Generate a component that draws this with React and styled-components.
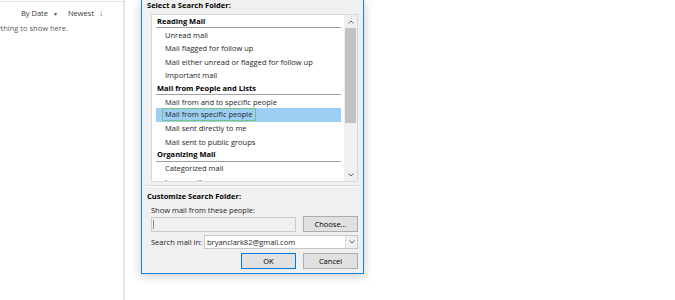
import React from "react";
import styled, { createGlobalStyle } from "styled-components";

const groups = [
  {
    title: "Reading Mail",
    items: [
      "Unread mail",
      "Mail flagged for follow up",
      "Mail either unread or flagged for follow up",
      "Important mail",
    ],
  },
  {
    title: "Mail from People and Lists",
    items: [
      "Mail from and to specific people",
      "Mail from specific people",
      "Mail sent directly to me",
      "Mail sent to public groups",
    ],
  },
  {
    title: "Organizing Mail",
    items: ["Categorized mail", "Large mail", "Old mail"],
  },
];

const SELECTED = "Mail from specific people";

const Chevron = ({ up }) => (
  <svg width="6" height="4" viewBox="0 0 6 4">
    <polyline
      points={up ? "0.5,3.5 3,1 5.5,3.5" : "0.5,0.5 3,3 5.5,0.5"}
      fill="none"
      stroke="#606060"
      strokeWidth="1"
    />
  </svg>
);

const App = () => {
  return (
    <Page>
      <GlobalStyle />
      <LeftPane>
        <SortBar>
          <SortItem>
            By Date <Caret>▾</Caret>
          </SortItem>
          <SortItem>
            Newest <Arrow>↓</Arrow>
          </SortItem>
        </SortBar>
        <Empty>We didn't find anything to show here.</Empty>
      </LeftPane>

      <Dialog>
        <Heading>Select a Search Folder:</Heading>
        <ListBox>
          <ListBody>
            {groups.map(g => (
              <React.Fragment key={g.title}>
                <Row $header>{g.title}</Row>
                {g.items.map(item => (
                  <Row key={item} $selected={item === SELECTED}>
                    {item === SELECTED ? <Focus>{item}</Focus> : item}
                  </Row>
                ))}
              </React.Fragment>
            ))}
          </ListBody>
          <ScrollBar>
            <ScrollArrow>
              <Chevron up />
            </ScrollArrow>
            <Track>
              <Thumb />
            </Track>
            <ScrollArrow>
              <Chevron />
            </ScrollArrow>
          </ScrollBar>
        </ListBox>

        <Separator />
        <Heading $gap>Customize Search Folder:</Heading>
        <Group>
          <Label>Show mail from these people:</Label>
          <InputRow>
            <TextBox />
            <Button>Choose...</Button>
          </InputRow>
          <ComboRow>
            <Label>Search mail in:</Label>
            <Combo>
              <ComboText>bryanclark82@gmail.com</ComboText>
              <ComboArrow>
                <Chevron />
              </ComboArrow>
            </Combo>
          </ComboRow>
          <ButtonRow>
            <Button $primary>OK</Button>
            <Button>Cancel</Button>
          </ButtonRow>
        </Group>
      </Dialog>
    </Page>
  );
};

export default App;

//------------------- Styles ------------------------//

const GlobalStyle = createGlobalStyle`
  *, *:before, *:after {
    box-sizing: border-box;
  }
  html, body {
    margin: 0;
    padding: 0;
    background: #ffffff;
    font-family: "Open Sans", "Noto Sans", sans-serif;
  }
`;

const Page = styled.div`
  display: flex;
  align-items: flex-start;
  height: 300px;
  overflow: hidden;
  background: #ffffff;
`;

const LeftPane = styled.div`
  width: 125px;
  height: 300px;
  flex-shrink: 0;
  border-right: 2px solid #e6e6e6;
  overflow: hidden;
`;

const SortBar = styled.div`
  display: flex;
  justify-content: flex-end;
  align-items: center;
  gap: 11px;
  height: 22px;
  margin-top: 1px;
  padding-right: 20px;
  border-top: 1px solid #e3e3e3;
`;

const SortItem = styled.span`
  font-size: 7.5px;
  color: #3a3a3a;
  white-space: nowrap;
`;

const Caret = styled.span`
  font-size: 6px;
  color: #555555;
  margin-left: 4px;
`;

const Arrow = styled.span`
  font-size: 8px;
  color: #555555;
  margin-left: 3px;
`;

const Empty = styled.div`
  display: flex;
  justify-content: flex-end;
  padding-right: 55px;
  white-space: nowrap;
  overflow: hidden;
  font-size: 7.5px;
  line-height: 11px;
  color: #5a5a5a;
`;

const Dialog = styled.div`
  width: 223px;
  flex-shrink: 0;
  margin-left: 16px;
  padding: 0 5px 4px 5px;
  background: #f0f0f0;
  border: 1px solid #1883d7;
  border-top: none;
  box-shadow: 0 2px 10px rgba(0, 0, 0, 0.22);
`;

const Heading = styled.div`
  font-size: 7.5px;
  font-weight: 700;
  line-height: 11px;
  color: #000000;
  margin-top: ${p => (p.$gap ? "4px" : "0")};
`;

const ListBox = styled.div`
  display: flex;
  height: 168px;
  margin: 3px 0 0 4px;
  background: #ffffff;
  border: 1px solid #d9d9d9;
  overflow: hidden;
`;

const ListBody = styled.div`
  flex: 1;
  padding: 0 3px 0 4px;
  overflow: hidden;
`;

const Row = styled.div`
  display: flex;
  align-items: center;
  height: 13.33px;
  font-size: 7.5px;
  white-space: nowrap;
  color: ${p => (p.$header ? "#000000" : "#1e1e1e")};
  font-weight: ${p => (p.$header ? 700 : 400)};
  padding-left: ${p => (p.$header ? "1px" : "9px")};
  border-bottom: ${p => (p.$header ? "1px solid #a0a0a0" : "none")};
  background: ${p => (p.$selected ? "#9dcff5" : "transparent")};
`;

const Focus = styled.span`
  display: inline-block;
  margin-left: -3px;
  padding: 0 3px 0 2px;
  line-height: 11px;
  border: 1px solid #7dbf7d;
`;

const ScrollBar = styled.div`
  display: flex;
  flex-direction: column;
  width: 13px;
  background: #f0f0f0;
`;

const ScrollArrow = styled.div`
  display: flex;
  align-items: center;
  justify-content: center;
  height: 13px;
`;

const Track = styled.div`
  flex: 1;
`;

const Thumb = styled.div`
  height: 95px;
  margin: 0 1px;
  background: #c2c2c2;
`;

const Separator = styled.div`
  margin: 3px -1px 0 -1px;
  border-top: 1px solid #d5d5d5;
  border-bottom: 1px solid #ffffff;
`;

const Group = styled.div`
  padding-left: 4px;
`;

const Label = styled.div`
  font-size: 7.5px;
  line-height: 11px;
  color: #1e1e1e;
  white-space: nowrap;
  margin-top: 3px;
`;

const InputRow = styled.div`
  display: flex;
  gap: 7px;
  align-items: center;
`;

const TextBox = styled.div`
  flex: 1;
  height: 15px;
  display: flex;
  align-items: stretch;
  padding: 2px 0 2px 1px;
  background: #f0f0f0;
  border: 1px solid #cccccc;
  &:before {
    content: "";
    width: 1px;
    background: #8a8a8a;
  }
`;

const Button = styled.button`
  width: 55px;
  height: 16px;
  padding: 0;
  font-family: inherit;
  font-size: 7.5px;
  color: #000000;
  background: #e1e1e1;
  border: 1px solid ${p => (p.$primary ? "#0078d7" : "#adadad")};
`;

const ComboRow = styled.div`
  display: flex;
  align-items: center;
  gap: 2px;
  margin-top: 3px;
  ${Label} {
    margin-top: 0;
  }
`;

const Combo = styled.div`
  flex: 1;
  display: flex;
  height: 14px;
  background: #ffffff;
  border: 1px solid #c6c6c6;
`;

const ComboText = styled.div`
  flex: 1;
  padding-left: 2px;
  font-size: 7.5px;
  line-height: 12px;
  color: #1e1e1e;
`;

const ComboArrow = styled.div`
  width: 12px;
  display: flex;
  align-items: center;
  justify-content: center;
  background: #f0f0f0;
  border-left: 1px solid #dddddd;
`;

const ButtonRow = styled.div`
  display: flex;
  justify-content: flex-end;
  gap: 7px;
  margin-top: 4px;
`;
